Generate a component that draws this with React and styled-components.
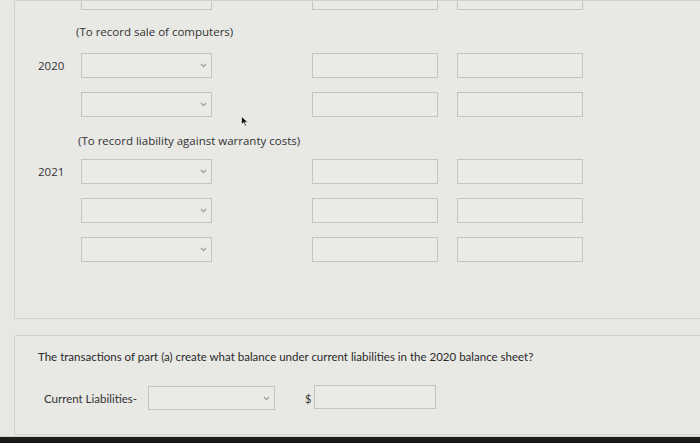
import React from "react";
import styled, { createGlobalStyle } from "styled-components";

const Global = createGlobalStyle`
  html, body { margin: 0; padding: 0; background: #e7e7e4; }
  body { overflow: hidden; }
`;

const Page = styled.div`
  position: relative;
  width: 700px;
  height: 443px;
  overflow: hidden;
  background: #e7e7e4;
  display: flex;
  flex-direction: column;
  font-family: "Open Sans", "DejaVu Sans", sans-serif;
  color: #333;
`;

const Panel = styled.section`
  flex: none;
  width: 720px;
  margin-left: 14px;
  border: 1px solid #d0d0cd;
  border-radius: 2px;
  box-sizing: border-box;
  background: #e8e8e5;
  display: flex;
  flex-direction: column;
  padding: ${(p) => p.$pad};
  margin-top: ${(p) => p.$top || "0"};
`;

const Heading = styled.div`
  font-size: 11.5px;
  line-height: 16px;
  padding-left: ${(p) => p.$indent}px;
  margin-top: ${(p) => p.$mt}px;
  margin-bottom: ${(p) => p.$mb}px;
  white-space: nowrap;
`;

const Rows = styled.div`
  display: flex;
  flex-direction: column;
  gap: 14px;
`;

const Row = styled.div`
  display: grid;
  grid-template-columns: 43px 131px 100px 126px 19px 126px;
  align-items: center;
  padding-left: 23px;
  height: 25px;
`;

const YearLabel = styled.span`
  font-size: 11.5px;
  line-height: 16px;
  color: #333;
`;

const Box = styled.div`
  box-sizing: border-box;
  height: ${(p) => p.$h || 25}px;
  border: 1px solid #c4c4c1;
  background: #eaeae7;
  position: relative;
`;

const SelectBox = styled(Box)`
  display: flex;
  align-items: center;
  justify-content: flex-end;
  padding-right: 4px;
`;

const Chevron = () => (
  <svg width="7" height="5" viewBox="0 0 7 5" aria-hidden="true">
    <path d="M1 1 L3.5 3.6 L6 1" fill="none" stroke="#9a9a98" strokeWidth="1.1" />
  </svg>
);

const Select = ({ h }) => (
  <SelectBox $h={h}>
    <Chevron />
  </SelectBox>
);

const TopCrop = styled.div`
  height: 9px;
  overflow: hidden;
  display: flex;
  align-items: flex-end;
`;

const JournalRow = ({ label }) => (
  <Row>
    <YearLabel>{label}</YearLabel>
    <Select />
    <span />
    <Box />
    <span />
    <Box />
  </Row>
);

const Question = styled.p`
  margin: 0;
  font-family: Lato, "Open Sans", sans-serif;
  font-size: 11.5px;
  line-height: 14px;
  color: #2a2a2a;
  white-space: nowrap;
`;

const AnswerRow = styled.div`
  display: flex;
  align-items: center;
  margin-top: 22px;
  padding-left: 6px;
  height: 24px;
`;

const SmallLabel = styled.span`
  font-family: Lato, "Open Sans", sans-serif;
  font-size: 11.5px;
  color: #333;
  width: 104px;
  white-space: nowrap;
`;

const AnswerSelect = styled(SelectBox)`
  width: 127px;
  height: 24px;
`;

const Dollar = styled.span`
  font-family: Lato, "Open Sans", sans-serif;
  font-size: 11px;
  color: #333;
  margin-left: 30px;
  width: 9px;
`;

const AnswerInput = styled(Box)`
  width: 122px;
  height: 24px;
  margin-top: -3px;
`;

const BottomBand = styled.div`
  flex: 1;
  margin-top: 1px;
  background: linear-gradient(#cfcfcc 0 1px, #222 1px, #111);
`;

const Cursor = styled.svg`
  position: absolute;
  left: 241px;
  top: 116px;
`;

export default function App() {
  return (
    <>
      <Global />
      <Page>
        <Panel $pad="0 0 56px 0" $top="0px">
          <TopCrop>
            <Row>
              <span />
              <Select />
              <span />
              <Box />
              <span />
              <Box />
            </Row>
          </TopCrop>
          <Heading $indent={61} $mt={14} $mb={13}>(To record sale of computers)</Heading>
          <Rows>
            <JournalRow label="2020" />
            <JournalRow label="" />
          </Rows>
          <Heading $indent={63} $mt={16} $mb={10}>(To record liability against warranty costs)</Heading>
          <Rows>
            <JournalRow label="2021" />
            <JournalRow label="" />
            <JournalRow label="" />
          </Rows>
        </Panel>
        <Panel $pad="14px 0 24px 23px" $top="16px">
          <Question>
            The transactions of part (a) create what balance under current liabilities in the 2020 balance sheet?
          </Question>
          <AnswerRow>
            <SmallLabel>Current Liabilities-</SmallLabel>
            <AnswerSelect>
              <Chevron />
            </AnswerSelect>
            <Dollar>$</Dollar>
            <AnswerInput />
          </AnswerRow>
        </Panel>
        <BottomBand />
        <Cursor width="8" height="11" viewBox="0 0 8 11" aria-hidden="true">
          <path d="M0.5 0.5 L0.5 8.5 L2.6 6.6 L4.2 10 L5.4 9.4 L3.9 6.2 L6.8 6.2 Z" fill="#111" stroke="#fff" strokeWidth="0.6" />
        </Cursor>
      </Page>
    </>
  );
}
